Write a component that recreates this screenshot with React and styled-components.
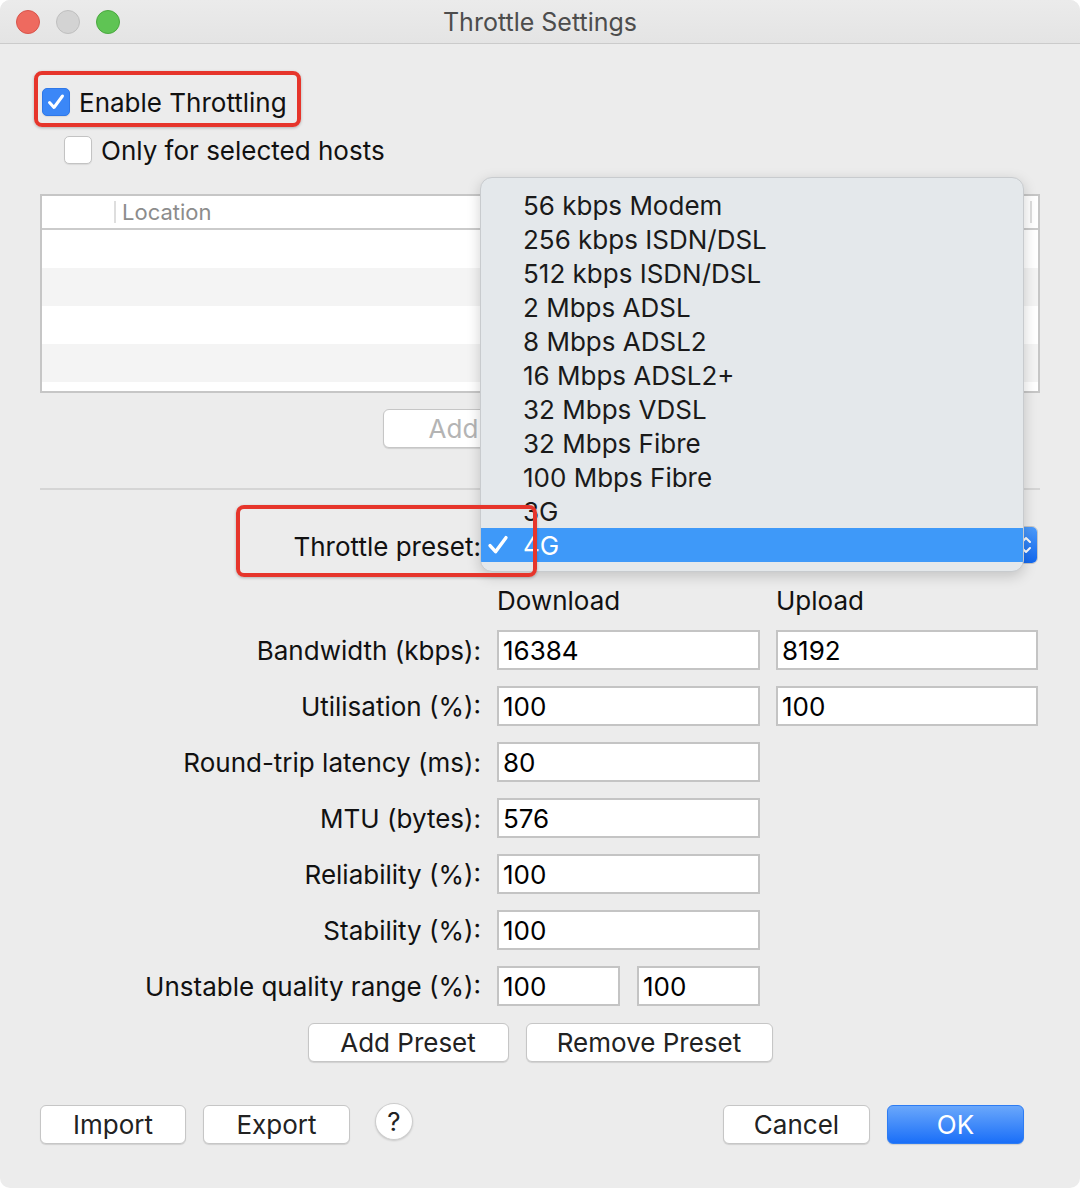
import React from 'react';
import styled, { createGlobalStyle } from 'styled-components';

const FONT = `"Inter", "Liberation Sans", sans-serif`;

const Global = createGlobalStyle`
  html, body { margin: 0; padding: 0; background: #ffffff; }
  body { font-family: ${FONT}; -webkit-font-smoothing: antialiased; }
  * { box-sizing: border-box; }
`;

const Window = styled.div`
  position: relative;
  width: 1080px;
  height: 1188px;
  background: #ececec;
  border-radius: 10px;
  overflow: hidden;
  display: flex;
  flex-direction: column;
  font-size: 26px;
  color: #111;
`;

const TitleBar = styled.div`
  flex: none;
  height: 44px;
  display: grid;
  grid-template-columns: 1fr auto 1fr;
  align-items: center;
  background: linear-gradient(#ebebeb, #e4e4e4);
  border-bottom: 1px solid #cbcbcb;
`;

const Lights = styled.div`
  display: flex;
  gap: 16px;
  padding-left: 16px;
`;

const Light = styled.span`
  width: 24px;
  height: 24px;
  border-radius: 50%;
  background: ${p => p.$bg};
  border: 1px solid ${p => p.$bd};
`;

const Title = styled.div`
  font-size: 25px;
  color: #4d4d4d;
`;

const Body = styled.div`
  flex: 1;
  display: flex;
  flex-direction: column;
  padding: 0 40px;
`;

const CheckRow = styled.label`
  height: 40px;
  display: flex;
  align-items: center;
  gap: 9px;
  margin-top: ${p => p.$mt}px;
  padding-left: ${p => p.$indent}px;
  color: #111;
`;

const Box = styled.span`
  width: 28px;
  height: 28px;
  border-radius: 5px;
  display: flex;
  align-items: center;
  justify-content: center;
  background: ${p => (p.$on ? '#3b87f7' : '#ffffff')};
  border: 1px solid ${p => (p.$on ? '#2f78e8' : '#c3c3c3')};
  box-shadow: 0 1px 1px rgba(0,0,0,0.08);
`;

const Table = styled.div`
  margin-top: 24px;
  height: 199px;
  border: 2px solid #c6c6c6;
  background: #fff;
  display: flex;
  flex-direction: column;
`;

const THead = styled.div`
  height: 34px;
  flex: none;
  display: flex;
  align-items: center;
  border-bottom: 2px solid #cbcbcb;
  background: #fff;
`;

const THCell = styled.div`
  height: 22px;
  display: flex;
  align-items: center;
  width: ${p => p.$w || 'auto'};
  flex: ${p => (p.$grow ? 1 : 'none')};
  border-left: ${p => (p.$sep ? '2px solid #dedede' : 'none')};
  padding-left: 6px;
  font-size: 22px;
  color: #8c8c8c;
`;

const TBody = styled.div`
  flex: 1;
  overflow: hidden;
`;

const TRow = styled.div`
  height: 38px;
  background: ${p => (p.$alt ? '#f4f4f4' : '#ffffff')};
`;

const Centered = styled.div`
  display: flex;
  justify-content: center;
  gap: ${p => p.$gap || 17}px;
  margin-top: ${p => p.$mt}px;
`;

const Button = styled.button`
  height: 39px;
  width: ${p => p.$w}px;
  font-family: ${FONT};
  font-size: 26px;
  color: ${p => (p.$disabled ? '#b4b4b4' : '#222')};
  background: #ffffff;
  border: 1px solid #c6c6c6;
  border-radius: 6px;
  box-shadow: 0 1px 1px rgba(0,0,0,0.12);
  padding: 0;
  display: flex;
  align-items: center;
  justify-content: center;
`;

const PrimaryButton = styled(Button)`
  color: #fff;
  background: linear-gradient(#6aa7fb, #1a6ff8);
  border: 1px solid #2d7cf3;
`;

const Separator = styled.div`
  margin-top: 40px;
  height: 2px;
  background: #d5d5d5;
`;

const Form = styled.div`
  margin-top: 36px;
  display: grid;
  grid-template-columns: 441px 263px 262px;
  column-gap: 16px;
  row-gap: 16px;
`;

const Label = styled.div`
  display: flex;
  align-items: center;
  justify-content: flex-end;
  height: 40px;
  white-space: nowrap;
  color: #111;
`;

const ColHead = styled.div`
  align-self: end;
  margin-top: 2px;
  height: 30px;
  line-height: 34px;
  color: #111;
`;

const Input = styled.div`
  height: 40px;
  width: ${p => (p.$w ? `${p.$w}px` : 'auto')};
  background: #fff;
  border: 2px solid #c4c4c4;
  display: flex;
  align-items: center;
  padding-left: 4px;
  color: #000;
`;

const Pair = styled.div`
  display: flex;
  gap: 17px;
`;

const Select = styled.div`
  grid-column: 2 / 4;
  height: 38px;
  background: #fff;
  border: 1px solid #c6c6c6;
  border-radius: 6px;
  display: flex;
  justify-content: flex-end;
  overflow: hidden;
`;

const SelectArrow = styled.div`
  width: 22px;
  background: linear-gradient(#4c9bfb, #1368ef);
  display: flex;
  align-items: center;
  justify-content: center;
`;

const Footer = styled.div`
  margin-top: 43px;
  margin-right: 16px;
  display: flex;
  align-items: center;
  gap: 17px;
`;

const Help = styled.div`
  width: 38px;
  height: 37px;
  border-radius: 50%;
  background: #fff;
  border: 1px solid #cdcdcd;
  box-shadow: 0 1px 2px rgba(0,0,0,0.15);
  display: flex;
  align-items: center;
  justify-content: center;
  font-size: 26px;
  color: #222;
  margin-left: 8px;
  margin-top: -6px;
`;

const Spacer = styled.div`
  flex: 1;
`;

const Menu = styled.div`
  position: absolute;
  left: 480px;
  top: 177px;
  width: 544px;
  height: 395px;
  background: #e4e8eb;
  border-radius: 12px;
  border: 1px solid #c8cbce;
  box-shadow: 0 4px 14px rgba(0,0,0,0.18);
  padding-top: 10px;
  overflow: hidden;
`;

const MenuItem = styled.div`
  height: 34px;
  display: flex;
  align-items: center;
  padding-left: 42px;
  position: relative;
  color: ${p => (p.$sel ? '#ffffff' : '#1a1a1a')};
  background: ${p => (p.$sel ? '#3e99f9' : 'transparent')};
`;

const MenuCheck = styled.span`
  position: absolute;
  left: 6px;
  top: 6px;
  display: flex;
`;

const Annotation = styled.div`
  position: absolute;
  left: ${p => p.$x}px;
  top: ${p => p.$y}px;
  width: ${p => p.$w}px;
  height: ${p => p.$h}px;
  border: 4px solid #e6352b;
  border-radius: 8px;
  box-shadow: 0 1px 3px rgba(0,0,0,0.25);
  pointer-events: none;
`;

const Check = ({ size = 18, color = '#fff', w = 3 }) => (
  <svg width={size} height={size} viewBox="0 0 18 18" style={{ display: 'block' }}>
    <path d="M2.5 9.5 L7 14.5 L15.5 3" fill="none" stroke={color} strokeWidth={w} strokeLinecap="round" strokeLinejoin="round" />
  </svg>
);

const presets = [
  '56 kbps Modem', '256 kbps ISDN/DSL', '512 kbps ISDN/DSL', '2 Mbps ADSL',
  '8 Mbps ADSL2', '16 Mbps ADSL2+', '32 Mbps VDSL', '32 Mbps Fibre',
  '100 Mbps Fibre', '3G', '4G',
];

const fields = [
  ['Bandwidth (kbps):', '16384', '8192'],
  ['Utilisation (%):', '100', '100'],
  ['Round-trip latency (ms):', '80'],
  ['MTU (bytes):', '576'],
  ['Reliability (%):', '100'],
  ['Stability (%):', '100'],
];

export default function App() {
  return (
    <>
      <Global />
      <Window>
        <TitleBar>
          <Lights>
            <Light $bg="#ee6a5f" $bd="#d8544b" />
            <Light $bg="#d3d3d3" $bd="#bfbfbf" />
            <Light $bg="#5fc454" $bd="#4aa83f" />
          </Lights>
          <Title>Throttle Settings</Title>
          <div />
        </TitleBar>
        <Body>
          <CheckRow $mt={38} $indent={2}>
            <Box $on><Check size={18} /></Box>
            Enable Throttling
          </CheckRow>
          <CheckRow $mt={8} $indent={24}>
            <Box />
            Only for selected hosts
          </CheckRow>
          <Table>
            <THead>
              <THCell $w="72px" />
              <THCell $grow $sep>Location</THCell>
              <THCell $w="2px" $sep />
            </THead>
            <TBody>
              {[0, 1, 2, 3, 4].map(i => <TRow key={i} $alt={i % 2 === 1} />)}
            </TBody>
          </Table>
          <Centered $mt={16} $gap={14}>
            <Button $w={141} $disabled>Add</Button>
            <Button $w={159} $disabled>Remove</Button>
          </Centered>
          <Separator />
          <Form>
            <Label>Throttle preset:</Label>
            <Select>
              <SelectArrow>
                <svg width="12" height="24" viewBox="0 0 12 24">
                  <path d="M2 9 L6 5 L10 9 M2 15 L6 19 L10 15" fill="none" stroke="#fff" strokeWidth="2" strokeLinecap="round" strokeLinejoin="round" />
                </svg>
              </SelectArrow>
            </Select>
            <div />
            <ColHead>Download</ColHead>
            <ColHead>Upload</ColHead>
            {fields.map(([label, a, b]) => (
              <React.Fragment key={label}>
                <Label>{label}</Label>
                <Input>{a}</Input>
                {b ? <Input>{b}</Input> : <div />}
              </React.Fragment>
            ))}
            <Label>Unstable quality range (%):</Label>
            <Pair>
              <Input $w={123}>100</Input>
              <Input $w={123}>100</Input>
            </Pair>
            <div />
          </Form>
          <Centered $mt={17} $gap={17}>
            <Button $w={201}>Add Preset</Button>
            <Button $w={247}>Remove Preset</Button>
          </Centered>
          <Footer>
            <Button $w={146}>Import</Button>
            <Button $w={147}>Export</Button>
            <Help>?</Help>
            <Spacer />
            <Button $w={147}>Cancel</Button>
            <PrimaryButton $w={137}>OK</PrimaryButton>
          </Footer>
        </Body>
        <Menu>
          {presets.map(p => (
            <MenuItem key={p} $sel={p === '4G'}>
              {p === '4G' && <MenuCheck><Check size={22} w={2.8} /></MenuCheck>}
              {p}
            </MenuItem>
          ))}
        </Menu>
        <Annotation $x={34} $y={71} $w={267} $h={56} />
        <Annotation $x={236} $y={505} $w={301} $h={72} />
      </Window>
    </>
  );
}
